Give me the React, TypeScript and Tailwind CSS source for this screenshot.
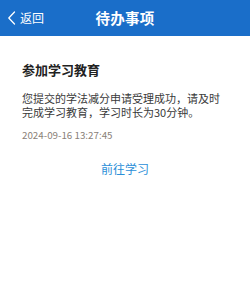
import React from 'react';

const font = '"Noto Sans CJK SC", "Liberation Sans", sans-serif';

export default function App() {
  return (
    <div className="w-[250px] h-[300px] bg-white" style={{ fontFamily: font }}>
      <header className="relative h-[36px] bg-[#1a6ec9] flex items-center justify-center">
        <button className="absolute left-[7px] top-0 h-full flex items-center text-white">
          <svg width="9" height="14" viewBox="0 0 9 14" fill="none">
            <path d="M7.5 1 L1.8 7 L7.5 13" stroke="white" strokeWidth="1.3" strokeLinecap="round" strokeLinejoin="round" />
          </svg>
          <span className="ml-[4px] text-[12px] leading-none">返回</span>
        </button>
        <h1 className="text-white text-[14.5px] font-bold tracking-[0.3px]">待办事项</h1>
      </header>
      <div className="px-[22px] pt-[25px]">
        <h2 className="text-[13px] font-bold text-[#222] leading-[18px]">参加学习教育</h2>
        <p className="mt-[12px] text-[11px] leading-[14px] text-[#3a3a3a]">
          您提交的学法减分申请受理成功，请及时完成学习教育，学习时长为30分钟。
        </p>
        <p className="mt-[10px] text-[9.8px] leading-[12px] text-[#8a8178]">2024-09-16 13:27:45</p>
        <div className="mt-[20px] flex justify-center">
          <button className="text-[12px] text-[#2b8fd8] leading-[16px]">前往学习</button>
        </div>
      </div>
    </div>
  );
}
